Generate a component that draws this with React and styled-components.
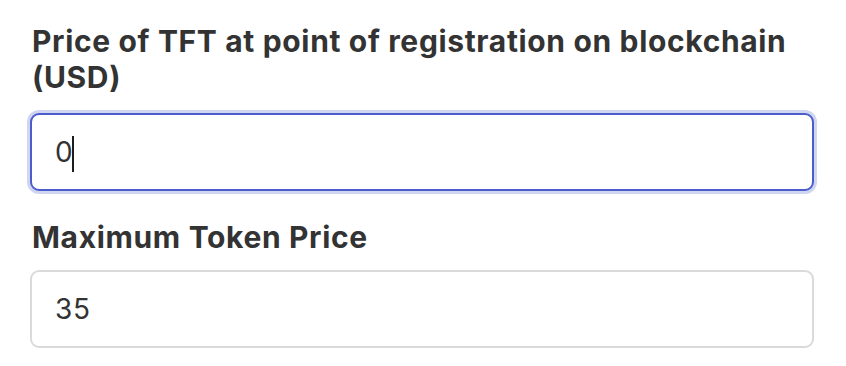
import React, { useState } from 'react';
import styled, { createGlobalStyle } from 'styled-components';

const GlobalStyle = createGlobalStyle`
  html, body {
    margin: 0;
    padding: 0;
    background: #ffffff;
  }
  body {
    font-family: Inter, 'Liberation Sans', Arial, sans-serif;
    color: #333333;
  }
`;

const Form = styled.form`
  display: flex;
  flex-direction: column;
  gap: 28px;
  padding: 23px 32px 0 30px;
  width: 784px;
`;

const Field = styled.div`
  display: flex;
  flex-direction: column;
`;

const Label = styled.label`
  font-size: 30px;
  line-height: 36px;
  font-weight: 700;
  letter-spacing: 0.65px;
  color: #333333;
  margin: 0 0 ${(p) => p.$gap || 17}px 2px;
`;

const InputWrap = styled.div`
  position: relative;
  width: 784px;
`;

const Input = styled.input`
  display: block;
  box-sizing: border-box;
  width: 784px;
  height: 78px;
  padding: 0 23px;
  font-family: Inter, 'Liberation Sans', Arial, sans-serif;
  font-size: 28px;
  letter-spacing: 0.6px;
  color: #333333;
  background: #ffffff;
  border: 2px solid ${(p) => (p.$focused ? '#4a5dcb' : '#dadada')};
  border-radius: 9px;
  outline: none;
  caret-color: transparent;
  box-shadow: ${(p) => (p.$focused ? '0 0 0 3px #d0d5f2' : 'none')};
`;

const Caret = styled.span`
  position: absolute;
  top: 23px;
  left: 42px;
  width: 2px;
  height: 36px;
  background: #1e1e1e;
  pointer-events: none;
`;

const App = () => {
  const [price, setPrice] = useState('0');
  const [maxPrice, setMaxPrice] = useState('35');

  return (
    <>
      <GlobalStyle />
      <Form onSubmit={(e) => e.preventDefault()}>
        <Field>
          <Label htmlFor="price" $gap={18}>
            Price of TFT at point of registration on blockchain (USD)
          </Label>
          <InputWrap>
            <Input
              id="price"
              $focused
              value={price}
              onChange={(e) => setPrice(e.target.value)}
            />
            <Caret />
          </InputWrap>
        </Field>
        <Field>
          <Label htmlFor="max" $gap={15}>Maximum Token Price</Label>
          <InputWrap>
            <Input
              id="max"
              value={maxPrice}
              onChange={(e) => setMaxPrice(e.target.value)}
            />
          </InputWrap>
        </Field>
      </Form>
    </>
  );
};

export default App;
